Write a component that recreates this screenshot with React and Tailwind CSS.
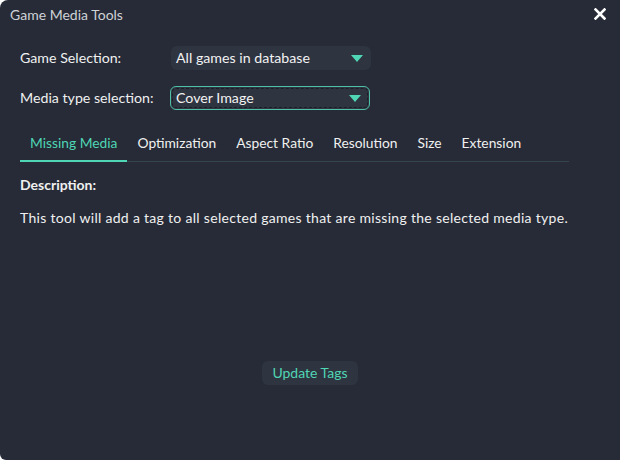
import React, { useState } from 'react'

const TEAL = 'text-[#4fd6b4]'

const Caret = () => (
    <svg width="12" height="7" viewBox="0 0 12 7" className="shrink-0">
        <path d="M0 0 H12 L6 7 Z" fill="#4fd6b4" />
    </svg>
)

const Select = ({ value, focused }) => (
    <div
        className={
            'w-[200px] h-[24px] flex items-center justify-between pl-[5px] pr-[8px] rounded-md bg-[#2f3441] ' +
            (focused ? 'border border-[#4fbfa5] outline outline-1 outline-dashed outline-[#1b1f27] -outline-offset-[3px]' : '')
        }
    >
        <span className="text-[14.2px] text-[#f2f2f2]">{value}</span>
        <Caret />
    </div>
)

const tabs = ['Missing Media', 'Optimization', 'Aspect Ratio', 'Resolution', 'Size', 'Extension']

export default function App() {
    const [active, setActive] = useState(0)

    return (
        <div className="w-[620px] h-[460px] bg-white" style={{ fontFamily: 'Lato, "Noto Sans", sans-serif' }}>
            <div className="w-full h-full bg-[#262b37] rounded-tl-lg rounded-bl-md flex flex-col">
                {/* title bar */}
                <div className="h-[28px] flex items-center justify-between pl-[10px] pr-[14px]">
                    <span className="text-[14px] text-[#cfd2d6]">Game Media Tools</span>
                    <svg width="12" height="12" viewBox="0 0 12 12">
                        <path d="M1.5 1.5 L10.5 10.5 M10.5 1.5 L1.5 10.5" stroke="#ffffff" strokeWidth="2.6" strokeLinecap="square" />
                    </svg>
                </div>

                <div className="px-[20px] pt-[18px] flex flex-col">
                    <div className="flex items-center h-[24px]">
                        <span className="w-[151px] text-[14.2px] text-[#f0f0f0]">Game Selection:</span>
                        <Select value="All games in database" />
                    </div>
                    <div className="flex items-center h-[24px] mt-[16px]">
                        <span className="w-[150px] text-[14.2px] text-[#f0f0f0]">Media type selection:</span>
                        <Select value="Cover Image" focused />
                    </div>

                    {/* tabs */}
                    <div className="mt-[23px] w-[549px] flex border-b border-[#34454b]">
                        {tabs.map((t, i) => (
                            <button
                                key={t}
                                onClick={() => setActive(i)}
                                className={
                                    'px-[10px] pt-0 pb-[6px] text-[13.8px] -mb-px border-b-2 ' +
                                    (i === active ? 'border-[#4fd6b4] ' + TEAL : 'border-transparent text-[#f0f0f0]')
                                }
                            >
                                {t}
                            </button>
                        ))}
                    </div>

                    <div className="mt-[12px] text-[14px] font-bold text-[#f0f0f0]">Description:</div>
                    <div className="mt-[12px] text-[14px] tracking-[0.3px] text-[#f0f0f0]">
                        This tool will add a tag to all selected games that are missing the selected media type.
                    </div>
                </div>

                <div className="flex-1 flex items-start justify-center pt-[133px]">
                    <button className={'px-[10px] h-[24px] rounded-md bg-[#2f3441] text-[14px] ' + TEAL}>Update Tags</button>
                </div>
            </div>
        </div>
    )
}
